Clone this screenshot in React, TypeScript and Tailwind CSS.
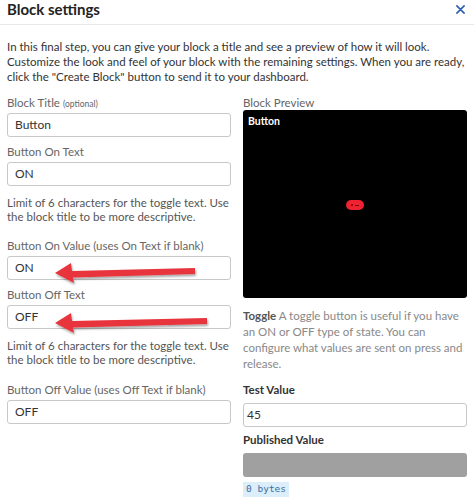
import React from 'react'

function Arrow({ top, len }: { top: number; len: number }) {
  const end = 3 + len
  return (
    <svg className="absolute left-[45px] pointer-events-none overflow-visible" style={{ top }} width={len + 10} height="24" viewBox={`0 0 ${len + 10} 24`}>
      <defs>
        <filter id="arrowShadow" x="-10%" y="-50%" width="120%" height="200%">
          <feDropShadow dx="1" dy="2" stdDeviation="1.3" floodColor="#000" floodOpacity="0.35" />
        </filter>
      </defs>
      <path
        d={`M${end} 8 L${end} 14 L20 17.5 L21 23 L2 13 L18 3 L19 11 Z`}
        fill="#e8353c"
        filter="url(#arrowShadow)"
      />
    </svg>
  )
}

function Field({ label, hint, value, arrow }: { label: string; hint?: string; value: string; arrow?: { top: number; len: number } }) {
  return (
    <div>
      <div className="h-[14px] text-[11.5px] leading-[14px] text-[#666]">
        {label}
        {hint && <span className="text-[8.5px] ml-[3px]">{hint}</span>}
      </div>
      <div className="relative mt-[3px] h-[24px] border border-[#c8c8c8] rounded-[3px] bg-white px-[7px] flex items-center text-[12px] text-[#333]">
        {value}
        {arrow && <Arrow top={arrow.top} len={arrow.len} />}
      </div>
    </div>
  )
}

export default function App() {
  return (
    <div className="w-[474px] h-[501px] bg-white overflow-hidden" style={{ fontFamily: 'Lato, "Open Sans", sans-serif' }}>
      <div className="h-[25px] flex items-start justify-between pl-[7px] pr-[9px] pt-[1px] border-b border-[#e8e8e8]">
        <div className="text-[15px] font-bold text-[#222] leading-[16px]">Block settings</div>
        <svg width="9" height="9" viewBox="0 0 10 10" className="text-[#2b5fb4] mt-[4px]">
          <path d="M1 1 L9 9 M9 1 L1 9" stroke="currentColor" strokeWidth="1.8" strokeLinecap="round" />
        </svg>
      </div>
      <p className="px-[7px] pt-[14px] text-[11.5px] leading-[15px] text-[#333]">
        In this final step, you can give your block a title and see a preview of how it will look. Customize the look
        and feel of your block with the remaining settings. When you are ready, click the "Create Block" button to send
        it to your dashboard.
      </p>
      <div className="px-[7px] pt-[12px] grid grid-cols-[224px_224px] gap-x-[12px]">
        <div className="flex flex-col">
          <Field label="Block Title" hint="(optional)" value="Button" />
          <div className="mt-[8px]">
            <Field label="Button On Text" value="ON" />
          </div>
          <p className="mt-[10px] text-[11.5px] leading-[14px] text-[#555]">
            Limit of 6 characters for the toggle text. Use the block title to be more descriptive.
          </p>
          <div className="mt-[15px]">
            <Field label="Button On Value (uses On Text if blank)" value="ON" arrow={{ top: 3, len: 139 }} />
          </div>
          <div className="mt-[8px]">
            <Field label="Button Off Text" value="OFF" arrow={{ top: 4, len: 151 }} />
          </div>
          <p className="mt-[10px] text-[11.5px] leading-[14px] text-[#555]">
            Limit of 6 characters for the toggle text. Use the block title to be more descriptive.
          </p>
          <div className="mt-[16px]">
            <Field label="Button Off Value (uses Off Text if blank)" value="OFF" />
          </div>
        </div>
        <div className="flex flex-col">
          <div className="h-[14px] text-[11.5px] leading-[14px] text-[#666]">Block Preview</div>
          <div className="h-[188px] bg-black rounded-[3px] relative">
            <div className="absolute left-[5px] top-[4px] text-white text-[10.5px] font-bold">Button</div>
            <div className="absolute left-[103px] top-[90px] w-[18px] h-[10px] rounded-full bg-[#ee2230] flex items-center justify-center gap-[2px]">
              <span className="w-[2px] h-[2px] rounded-full bg-[#7a0008]" />
              <span className="w-[4px] h-[1px] bg-[#7a0008]" />
            </div>
          </div>
          <p className="mt-[10px] text-[11.5px] leading-[16px] text-[#888]">
            <span className="font-bold text-[#555]">Toggle</span> A toggle button is useful if you have an ON or OFF type
            of state. You can configure what values are sent on press and release.
          </p>
          <div className="mt-[10px] text-[11.5px] font-bold text-[#333] leading-[16px]">Test Value</div>
          <div className="mt-[5px] h-[24px] border border-[#c8c8c8] rounded-[3px] px-[3px] flex items-center text-[12px] text-[#333]">
            45
          </div>
          <div className="mt-[5px] text-[11.5px] font-bold text-[#333] leading-[16px]">Published Value</div>
          <div className="mt-[5px] h-[24px] bg-[#a0a0a0] rounded-[3px]" />
          <div className="mt-[5px] self-start px-[3px] h-[15px] flex items-center bg-[#dbeefa] text-[#3a6ea5] text-[9.5px]" style={{ fontFamily: '"DejaVu Sans Mono", monospace' }}>
            0 bytes
          </div>
        </div>
      </div>
    </div>
  )
}
